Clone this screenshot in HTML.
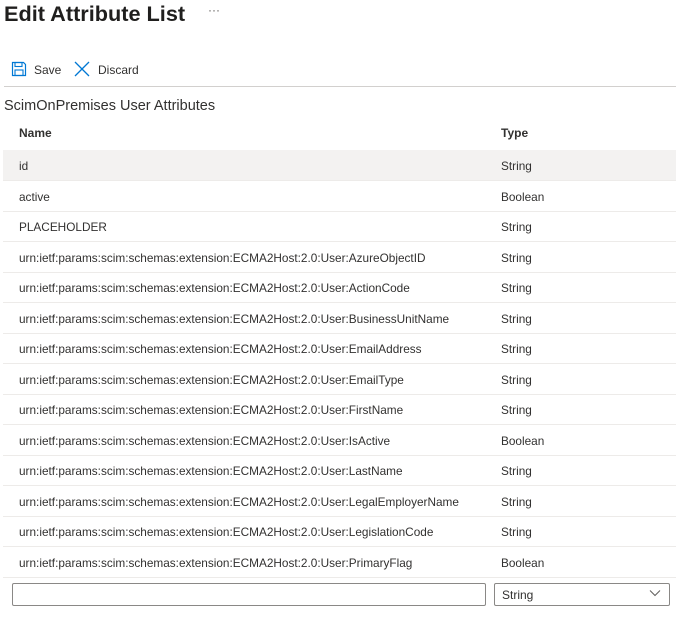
<!DOCTYPE html>
<html><head><meta charset="utf-8"><style>
body{margin:0;width:676px;height:617px;background:#fff;font-family:"Liberation Sans",sans-serif;color:#323130;position:relative;overflow:hidden}
.a{position:absolute;white-space:nowrap}
.row{position:absolute;left:3px;width:673px;height:30px;border-bottom:1px solid #edebe9;font-size:11.8px}
.row span{position:absolute;top:9px}
.row .n{left:16px}.row .t{left:498px}
</style></head><body>
<div class="a" style="left:4px;top:1px;font-size:21.7px;font-weight:bold;color:#201f1e">Edit Attribute List</div>
<div class="a" style="left:208px;top:3px;font-size:12px;color:#605e5c">···</div>
<svg class="a" style="left:11px;top:61px" width="16" height="16" viewBox="0 0 16 16"><path d="M1.5 1.5h11l2 2v11h-13z" fill="none" stroke="#0078d4" stroke-width="1.2"/><rect x="4" y="1.5" width="7" height="4" fill="none" stroke="#0078d4" stroke-width="1.1"/><rect x="4" y="9" width="8" height="5.5" fill="none" stroke="#0078d4" stroke-width="1.1"/></svg>
<div class="a" style="left:34px;top:63px;font-size:12px">Save</div>
<svg class="a" style="left:74px;top:61px" width="16" height="16" viewBox="0 0 16 16"><path d="M1 1L15 15M15 1L1 15" stroke="#0078d4" stroke-width="1.3"/></svg>
<div class="a" style="left:98px;top:63px;font-size:12px">Discard</div>
<div class="a" style="left:4px;top:86px;width:672px;height:1px;background:#d2d0ce"></div>
<div class="a" style="left:4px;top:98px;font-size:14.5px">ScimOnPremises User Attributes</div>
<div class="a" style="left:19px;top:126px;font-size:12px;font-weight:bold">Name</div>
<div class="a" style="left:501px;top:126px;font-size:12px;font-weight:bold">Type</div>
<div class="row" style="top:150px;background:#f3f2f1"><span class="n">id</span><span class="t">String</span></div>
<div class="row" style="top:181px"><span class="n">active</span><span class="t">Boolean</span></div>
<div class="row" style="top:211px"><span class="n">PLACEHOLDER</span><span class="t">String</span></div>
<div class="row" style="top:242px"><span class="n">urn:ietf:params:scim:schemas:extension:ECMA2Host:2.0:User:AzureObjectID</span><span class="t">String</span></div>
<div class="row" style="top:272px"><span class="n">urn:ietf:params:scim:schemas:extension:ECMA2Host:2.0:User:ActionCode</span><span class="t">String</span></div>
<div class="row" style="top:303px"><span class="n">urn:ietf:params:scim:schemas:extension:ECMA2Host:2.0:User:BusinessUnitName</span><span class="t">String</span></div>
<div class="row" style="top:333px"><span class="n">urn:ietf:params:scim:schemas:extension:ECMA2Host:2.0:User:EmailAddress</span><span class="t">String</span></div>
<div class="row" style="top:364px"><span class="n">urn:ietf:params:scim:schemas:extension:ECMA2Host:2.0:User:EmailType</span><span class="t">String</span></div>
<div class="row" style="top:394px"><span class="n">urn:ietf:params:scim:schemas:extension:ECMA2Host:2.0:User:FirstName</span><span class="t">String</span></div>
<div class="row" style="top:425px"><span class="n">urn:ietf:params:scim:schemas:extension:ECMA2Host:2.0:User:IsActive</span><span class="t">Boolean</span></div>
<div class="row" style="top:455px"><span class="n">urn:ietf:params:scim:schemas:extension:ECMA2Host:2.0:User:LastName</span><span class="t">String</span></div>
<div class="row" style="top:486px"><span class="n">urn:ietf:params:scim:schemas:extension:ECMA2Host:2.0:User:LegalEmployerName</span><span class="t">String</span></div>
<div class="row" style="top:516px"><span class="n">urn:ietf:params:scim:schemas:extension:ECMA2Host:2.0:User:LegislationCode</span><span class="t">String</span></div>
<div class="row" style="top:547px"><span class="n">urn:ietf:params:scim:schemas:extension:ECMA2Host:2.0:User:PrimaryFlag</span><span class="t">Boolean</span></div>
<div class="a" style="left:12px;top:583px;width:472px;height:21px;border:1px solid #8a8886;border-radius:2px"></div>
<div class="a" style="left:494px;top:583px;width:174px;height:21px;border:1px solid #8a8886;border-radius:2px"></div>
<div class="a" style="left:502px;top:588px;font-size:12px">String</div>
<svg class="a" style="left:649px;top:589px" width="12" height="8" viewBox="0 0 12 8"><path d="M1 1.5L6 6.5L11 1.5" fill="none" stroke="#605e5c" stroke-width="1"/></svg>
</body></html>
